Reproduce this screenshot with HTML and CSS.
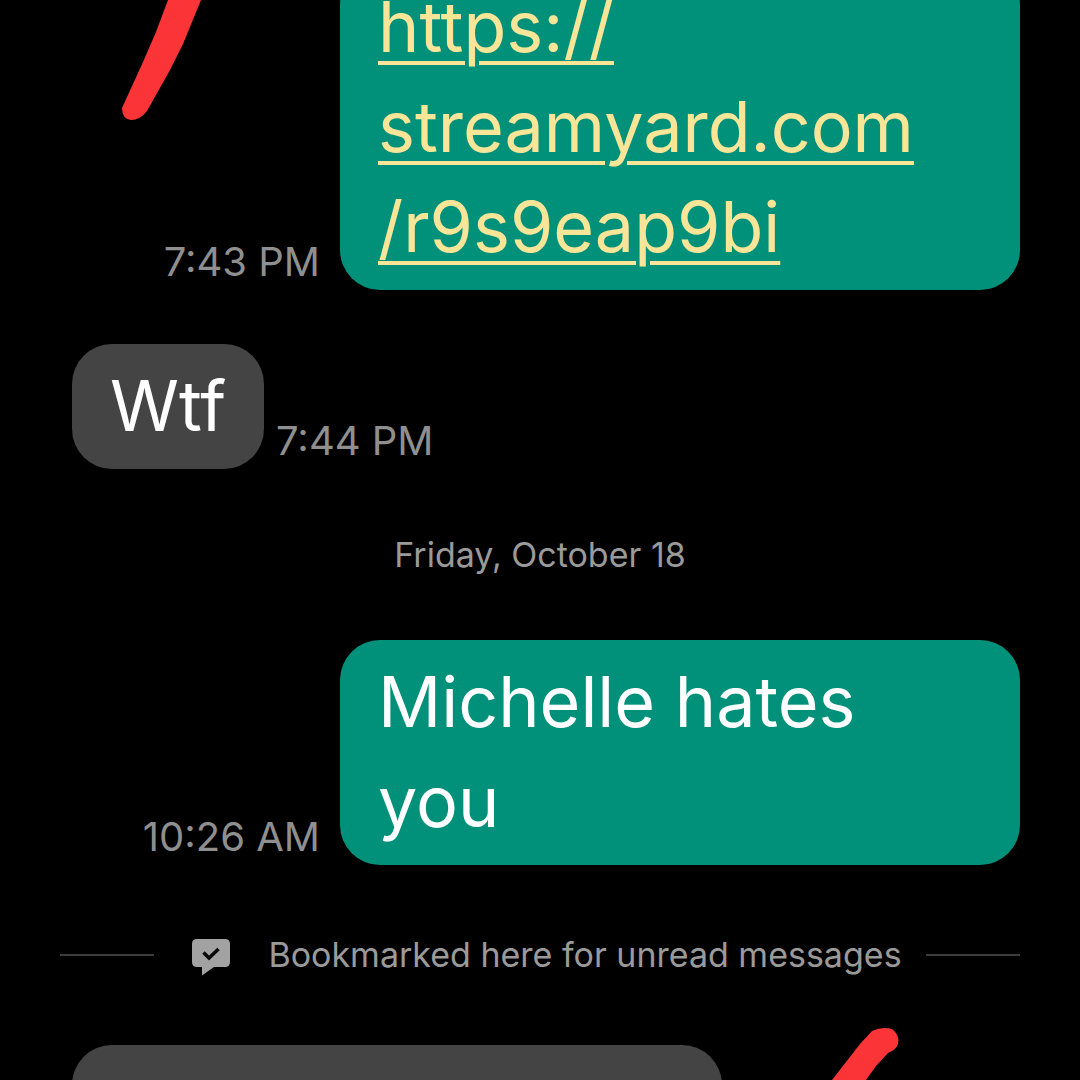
FILE: index.html
```html
<!DOCTYPE html>
<html lang="en">
<head>
<meta charset="utf-8">
<title>Messages</title>
<link rel="stylesheet" href="styles.css">
</head>
<body>
<main class="thread">
  <div class="row row-out row-first">
    <span class="time">7:43 PM</span>
    <div class="bubble bubble-out"><a class="link" href="#">https://<br>streamyard.com<br>/r9s9eap9bi</a></div>
  </div>
  <div class="row row-in row-wtf">
    <div class="bubble bubble-in">Wtf</div>
    <span class="time">7:44 PM</span>
  </div>
  <div class="date">Friday, October 18</div>
  <div class="row row-out">
    <span class="time">10:26 AM</span>
    <div class="bubble bubble-out">Michelle hates<br>you</div>
  </div>
  <div class="bookmark">
    <span class="rule"></span>
    <svg class="bookmark-icon" width="40" height="38" viewBox="0 0 40 38">
      <path class="icon-fill" d="M6 1H34Q39 1 39 6V24Q39 29 34 29H23L11 37.500V29H6Q1 29 1 24V6Q1 1 6 1Z"/>
      <path class="icon-check" d="M12.500 14.500L18 20L27.500 11"/>
    </svg>
    <span class="bookmark-text">Bookmarked here for unread messages</span>
    <span class="rule"></span>
  </div>
  <div class="row row-in">
    <div class="bubble bubble-in bubble-last"></div>
  </div>
</main>
<svg class="scribble" width="1080" height="1080" viewBox="0 0 1080 1080">
  <path class="scribble-fill" d="M168 0H201L183 44L170 70L147 111Q140 120 131 120Q122 119 122 108L143 62L156 32Z"/>
  <path class="scribble-fill" d="M832 1080L860 1044L872 1031Q882 1026 892 1029Q900 1035 898 1044Q896 1050 888 1053L876 1066L866 1080Z"/>
</svg>
</body>
</html>
```
FILE: styles.css
```css
* { box-sizing: border-box; }
html, body {
  margin: 0;
  width: 1080px;
  height: 1080px;
  overflow: hidden;
  background: #000;
}
body {
  position: relative;
  font-family: Inter, "Liberation Sans", sans-serif;
}
.thread {
  display: flex;
  flex-direction: column;
  padding: 0 60px;
  margin-top: -35px;
}
.row {
  display: flex;
  align-items: flex-end;
  gap: 20px;
}
.row-out { justify-content: flex-end; }
.row-in { padding-left: 12px; gap: 12px; }
.row-wtf { margin-top: 54px; }
.bubble {
  font-family: Inter, "Liberation Sans", sans-serif;
  font-size: 70px;
  line-height: 100px;
  padding: 12px 38px 13px;
  border-radius: 40px;
  color: #fff;
}
.bubble-out {
  width: 680px;
  background: #01917a;
}
.bubble-in { background: #444; }
.bubble-last {
  width: 650px;
  height: 200px;
}
.link {
  color: #f9e597;
  text-decoration: underline;
  text-decoration-thickness: 4px;
  text-underline-offset: 9px;
}
.time {
  font-size: 40px;
  line-height: 48px;
  color: #8f8f8f;
  padding-bottom: 4px;
}
.date {
  margin-top: 64px;
  margin-bottom: 63px;
  text-align: center;
  font-size: 34px;
  line-height: 44px;
  color: #9a9a9a;
}
.bookmark {
  display: flex;
  align-items: center;
  height: 60px;
  margin-top: 60px;
  margin-bottom: 60px;
}
.rule {
  flex: 1;
  height: 2px;
  background: #3c3c3c;
}
.bookmark-icon { margin: 4px 37px 0 37px; flex: none; }
.icon-fill { fill: #a2a2a2; }
.icon-check {
  fill: none;
  stroke: #0a0a0a;
  stroke-width: 3.500;
}
.bookmark-text {
  font-size: 34px;
  line-height: 44px;
  color: #9a9a9a;
  margin-right: 24px;
}
.scribble {
  position: absolute;
  left: 0;
  top: 0;
}
.scribble-fill { fill: #fb3537; }
```
